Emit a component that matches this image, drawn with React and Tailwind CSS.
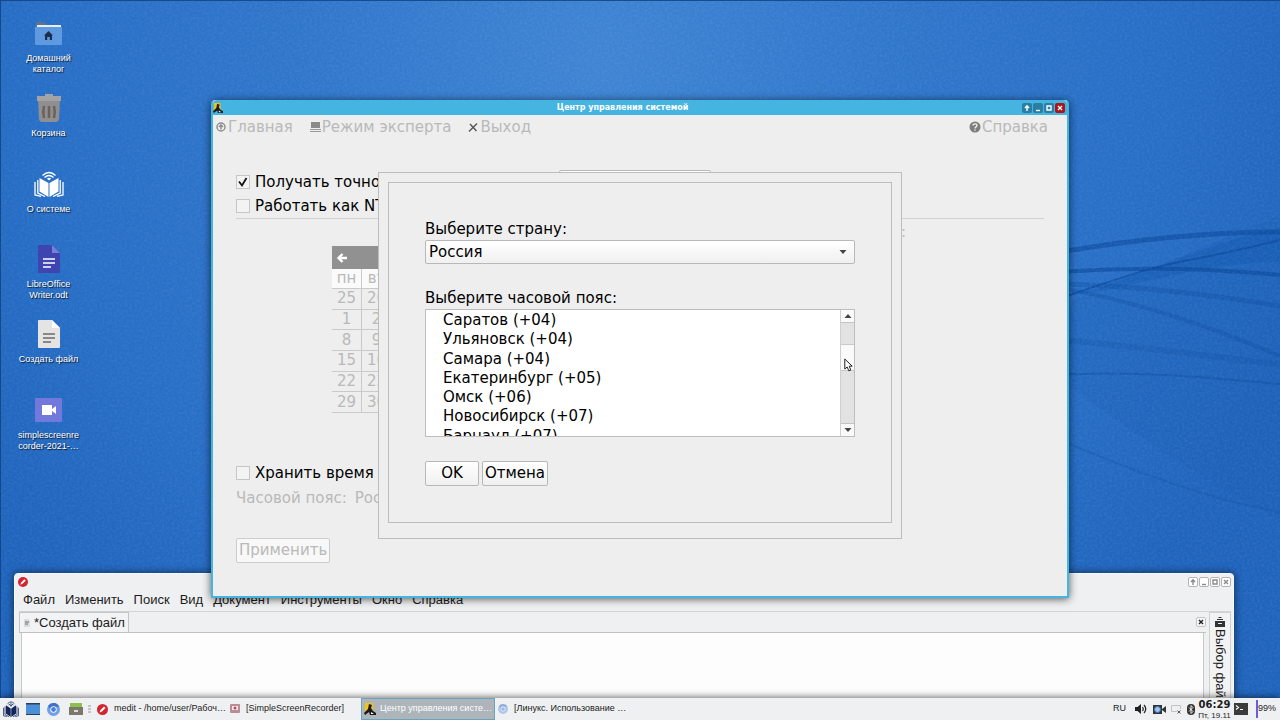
import { useState } from 'react';
import clsx from 'clsx';

const zones = [
  'Саратов (+04)',
  'Ульяновск (+04)',
  'Самара (+04)',
  'Екатеринбург (+05)',
  'Омск (+06)',
  'Новосибирск (+07)',
  'Барнаул (+07)',
];

const weekDays = ['пн', 'вт'];
const weeks = [
  [25, 26],
  [1, 2],
  [8, 9],
  [15, 16],
  [22, 23],
  [29, 30],
];

const editorMenu = ['Файл', 'Изменить', 'Поиск', 'Вид', 'Документ', 'Инструменты', 'Окно', 'Справка'];

export default function App() {
  return (
    <div className="relative h-screen overflow-hidden bg-[#2369c1] font-['Liberation_Sans',sans-serif] text-[#1c1c1c]">
      <Wallpaper />
      <DesktopIcons />
      <EditorWindow />
      <ControlCenter />
      <Taskbar />
    </div>
  );
}

function Wallpaper() {
  return (
    <svg className="absolute inset-0 h-full w-full" viewBox="0 0 1280 720" preserveAspectRatio="none" aria-hidden="true">
      <defs>
        <radialGradient id="sky" gradientUnits="userSpaceOnUse" cx="600" cy="60" r="760">
          <stop offset="0" stopColor="#3f85d4" />
          <stop offset="0.4" stopColor="#2f76cb" />
          <stop offset="0.75" stopColor="#276ec6" />
          <stop offset="1" stopColor="#1f64bc" />
        </radialGradient>
        <filter id="grain" x="0" y="0" width="100%" height="100%">
          <feTurbulence type="fractalNoise" baseFrequency="0.4" numOctaves="3" seed="4" />
          <feColorMatrix values="0 0 0 0 1  0 0 0 0 1  0 0 0 0 1  0.5 0 0 0 -0.17" />
        </filter>
      </defs>
      <rect width="1280" height="720" fill="url(#sky)" />
      <path d="M1060 306 C1130 275 1200 250 1280 215 L1280 520 C1200 480 1130 430 1060 380 Z" fill="#1458ad" opacity="0.18" />
      <path d="M1060 297 C1140 280 1210 240 1280 228 L1280 262 C1200 262 1130 290 1060 297 Z" fill="#0f56ae" opacity="0.35" />
      <g fill="none" stroke="#0b4a9c">
        <path d="M1060 252 C1120 242 1200 232 1280 232" strokeWidth="5" opacity="0.6" />
        <path d="M1060 272 C1130 267 1210 268 1280 275" strokeWidth="4" opacity="0.65" />
        <path d="M1060 298 C1110 282 1150 266 1200 258 C1230 252 1255 246 1280 240" strokeWidth="2" opacity="0.7" />
        <path d="M1060 284 C1140 286 1220 296 1280 306" strokeWidth="5" opacity="0.3" />
        <path d="M1060 288 C1130 300 1200 322 1280 356" strokeWidth="4" opacity="0.3" />
        <path d="M1060 375 C1130 370 1210 378 1280 384" strokeWidth="2" opacity="0.4" />
        <path d="M1060 340 C1140 346 1220 358 1280 364" strokeWidth="6" opacity="0.2" />
        <path d="M1060 440 C1130 470 1210 500 1280 512" strokeWidth="2" opacity="0.25" />
      </g>
      <rect width="1280" height="720" filter="url(#grain)" opacity="0.25" />
      <path d="M0 0.500H1280M0.500 0V720" stroke="#123f7d" opacity="0.8" />
    </svg>
  );
}

function DesktopIcons() {
  const items = [
    { icon: <HomeFolderIcon />, lines: ['Домашний', 'каталог'] },
    { icon: <TrashIcon />, lines: ['Корзина'] },
    { icon: <BookIcon className="h-[26px] w-[30px]" color="#ffffff" />, lines: ['О системе'] },
    { icon: <FileIcon body="#3f45b0" fold="#7a7ed6" text="#ffffff" />, lines: ['LibreOffice', 'Writer.odt'] },
    { icon: <FileIcon body="#e4e4e4" fold="#ffffff" text="#6b6b6b" />, lines: ['Создать файл'] },
    { icon: <VideoIcon />, lines: ['simplescreenre', 'corder-2021-…'] },
  ];
  return (
    <ul className="absolute top-[15px] left-2 grid h-[452px] w-[81px] auto-rows-fr">
      {items.map((item) => (
        <li key={item.lines[0]} className="flex flex-col items-center gap-0.5">
          <div className="flex h-9 items-center">{item.icon}</div>
          <div className="text-center text-[9px] leading-[11px] text-white [text-shadow:1px_1px_1px_rgba(0,0,0,0.8)]">
            {item.lines.map((line) => (
              <div key={line}>{line}</div>
            ))}
          </div>
        </li>
      ))}
    </ul>
  );
}

function EditorWindow() {
  return (
    <section className="absolute top-[573px] right-[46px] bottom-0 left-[14px] flex flex-col rounded-t border border-[#f8f8f8] bg-[#eff0f1] pr-0.5 pl-1 shadow-[0_0_8px_rgba(0,0,0,0.6)]">
      <header className="flex h-[15px] shrink-0 items-center justify-between">
        <MeditIcon className="-ml-px h-[10px] w-[10px]" />
        <div className="flex gap-px">
          {['up', 'min', 'max', 'close'].map((kind) => (
            <WindowButton key={kind} kind={kind} className="border border-[#b4b4b4] bg-white text-[#8a8a8a]" />
          ))}
        </div>
      </header>
      <nav className="flex h-[23px] shrink-0 items-center gap-[10px] border-b border-[#d4d4d4] px-1 text-[13px]">
        {editorMenu.map((name) => (
          <button key={name} type="button">
            {name}
          </button>
        ))}
      </nav>
      <div className="flex min-h-0 flex-1">
        <div className="flex min-w-0 flex-1 flex-col pr-[3px]">
          <div className="flex h-[21px] shrink-0 items-center justify-between border-b border-[#c0c0c0]">
            <button type="button" className="flex h-5 items-center gap-1 border border-b-0 border-[#c4c4c4] bg-[#f2f3f4] px-1 pr-[3px] text-[13px]">
              <svg className="h-2 w-[6px]" viewBox="0 0 6 8" aria-hidden="true">
                <path d="M0 0H4L6 2V8H0Z" fill="#dcdcdc" />
                <path d="M1 3H5M1 5H4" stroke="#6d6d6d" />
              </svg>
              *Создать файл
            </button>
            <WindowButton kind="close" className="border border-[#c4c4c4] bg-[#f7f7f7] text-[#202020]" />
          </div>
          <textarea aria-label="Текст" className="mx-0.5 block min-h-0 flex-1 resize-none border border-t-0 border-[#c8c8c8] bg-[#fdfdfd] outline-none" />
        </div>
        <button type="button" className="flex w-[22px] items-center gap-0.5 overflow-hidden border border-[#d0d0d0] bg-[#f2f3f4] pt-1 text-[13px] whitespace-nowrap [writing-mode:vertical-rl]">
          <svg className="h-[10px] w-[10px] shrink-0" viewBox="0 0 10 10" aria-hidden="true">
            <path d="M3.500 0.500H6.500M2 2.500H8" stroke="#333" />
            <path d="M0 4H10V10H0Z" fill="#333" />
            <path d="M3 6.500H7" stroke="#eee" />
          </svg>
          Выбор файла
        </button>
      </div>
    </section>
  );
}

function ControlCenter() {
  const [ntp, setNtp] = useState(true);
  const [server, setServer] = useState(false);
  const [utc, setUtc] = useState(false);

  return (
    <section className="absolute inset-x-[211px] top-[100px] h-[498px] rounded-t border-2 border-t-0 border-[#45b4e0] bg-[#eeeeee] font-['DejaVu_Sans',sans-serif] text-[15px] shadow-[0_1px_9px_rgba(0,0,0,0.65)]">
      <header className="flex h-[15px] items-center justify-between rounded-t bg-[#45b4e0]">
        <AltIcon className="h-[10px] w-[10px]" />
        <h1 className="text-[8px] font-bold text-white">Центр управления системой</h1>
        <div className="flex gap-px pr-0.5">
          <WindowButton kind="up" className="bg-[#2a7ea3] text-white" />
          <WindowButton kind="min" className="bg-[#2a7ea3] text-white" />
          <WindowButton kind="max" className="bg-[#2a7ea3] text-white" />
          <WindowButton kind="close" className="bg-[#b01218] text-white" />
        </div>
      </header>

      <nav className="flex h-6 items-center gap-[17px] pr-[19px] pl-[3px] text-[#b9b9b9]">
        <button type="button" className="flex items-center gap-0.5">
          <svg className="h-[10px] w-[10px]" viewBox="0 0 10 10" aria-hidden="true">
            <circle cx="5" cy="5" r="4" fill="#f2f2f2" stroke="#8f8f8f" strokeWidth="1.500" />
            <path d="M5 7.500V3M3 5L5 2.800L7 5" fill="none" stroke="#8f8f8f" strokeWidth="1.500" />
          </svg>
          Главная
        </button>
        <button type="button" className="flex items-center gap-px">
          <svg className="h-[10px] w-[11px]" viewBox="0 0 11 10" aria-hidden="true">
            <path d="M1 0H10V6H1Z" fill="#8a8a8a" />
            <path d="M0 7.500H11M0 9.500H11" stroke="#9a9a9a" />
          </svg>
          Режим эксперта
        </button>
        <button type="button" className="flex items-center gap-0.5">
          <svg className="h-[9px] w-[10px]" viewBox="0 0 10 9" aria-hidden="true">
            <path d="M2 1L8.500 8M9 0.500L1 8.500" stroke="#555" strokeWidth="1.400" />
          </svg>
          Выход
        </button>
        <button type="button" className="ml-auto flex items-center gap-px">
          <svg className="h-3 w-3" viewBox="0 0 12 12" aria-hidden="true">
            <circle cx="6" cy="6" r="5.500" fill="#7d7d7d" />
            <path d="M4 4.500C4 2.200 8 2.200 8 4.500C8 6 6 5.800 6 7.500M6 8.500V9.800" fill="none" stroke="#f4f4f4" strokeWidth="1.300" />
          </svg>
          Справка
        </button>
      </nav>

      <main className="pt-[31px] pr-[23px] pl-[23px]">
        <div className="flex">
          <div className="w-[323px] shrink-0">
            <CheckRow checked={ntp} onChange={setNtp}>
              Получать точное
            </CheckRow>
          </div>
          <input aria-label="NTP-сервер" className="h-6 w-[152px] rounded-xs border border-[#b8b8b8] bg-white" />
        </div>
        <CheckRow checked={server} onChange={setServer}>
          Работать как NTP
        </CheckRow>
        <hr className="border-[#d2d2d2]" />

        <div className="flex h-[27px] items-center justify-end pr-[138px] text-[#b9b9b9]">Время:</div>
        <div className="ml-24 w-[60px] text-[#b9b9b9]">
          <div className="flex h-[23px] items-center bg-[#919191] px-1">
            <button type="button" aria-label="Предыдущий месяц">
              <svg className="h-3 w-3" viewBox="0 0 12 12" aria-hidden="true">
                <path d="M11 6H3M6.500 2L2.500 6L6.500 10" fill="none" stroke="#fff" strokeWidth="2.400" />
              </svg>
            </button>
          </div>
          <table className="h-36 w-full table-fixed border-collapse text-center">
            <thead>
              <tr className="bg-[#fafafa]">
                {weekDays.map((day) => (
                  <th key={day} className="border-r border-b border-[#cacaca] p-0 leading-[19px] font-normal">
                    {day}
                  </th>
                ))}
              </tr>
            </thead>
            <tbody>
              {weeks.map((week) => (
                <tr key={week[0]}>
                  {week.map((day) => (
                    <td key={day} className="border-r border-b border-[#cacaca] p-0 leading-[19px]">
                      {day}
                    </td>
                  ))}
                </tr>
              ))}
            </tbody>
          </table>
        </div>

        <div className="mt-12">
          <CheckRow checked={utc} onChange={setUtc}>
            Хранить время в
          </CheckRow>
        </div>
        <div className="flex h-[26px] items-center gap-2 text-[#b9b9b9]">
          <span>Часовой пояс:</span>
          <span>Россия</span>
        </div>
        <button type="button" disabled className="mt-[27px] h-[25px] rounded-xs border border-[#cccccc] bg-[#f8f8f8] px-0.5 leading-none text-[#b9b9b9]">
          Применить
        </button>
      </main>

      <ZoneDialog />
    </section>
  );
}

function CheckRow({ checked, onChange, children }) {
  return (
    <label className="flex h-6 items-center gap-[5px] whitespace-nowrap text-black">
      <span className="relative flex">
        <input
          type="checkbox"
          checked={checked}
          onChange={(e) => onChange(e.target.checked)}
          className="h-[14px] w-[14px] appearance-none border border-[#c6c6c6] bg-[#f3f3f3]"
        />
        {checked && (
          <svg className="pointer-events-none absolute inset-0 h-[14px] w-[14px]" viewBox="0 0 14 14" aria-hidden="true">
            <path d="M3 6.500L6 10.500L10.500 3" fill="none" stroke="#111" strokeWidth="1.800" />
          </svg>
        )}
      </span>
      {children}
    </label>
  );
}

function ZoneDialog() {
  return (
    <div role="dialog" aria-label="Часовой пояс" className="absolute inset-x-[165px] top-[72px] border border-[#bdbdbd] bg-[#eeeeee] p-[9px] pb-[15px] text-black">
      <div className="border border-[#bdbdbd] px-9 pt-[34px] pb-9">
        <label htmlFor="country" className="block h-[23px] leading-6">
          Выберите страну:
        </label>
        <div className="relative">
          <select
            id="country"
            defaultValue="ru"
            className="block h-6 w-full appearance-none rounded-xs border border-[#b8b8b8] bg-linear-to-b from-white to-[#f0f0f0] px-[3px] leading-none"
          >
            <option value="ru">Россия</option>
          </select>
          <Triangle className="pointer-events-none absolute top-[10px] right-2 rotate-180" />
        </div>

        <div id="zone-label" className="mt-[22px] h-[23px] leading-6">
          Выберите часовой пояс:
        </div>
        <div className="flex h-32 border border-[#bdbdbd] bg-white">
          <div className="min-w-0 flex-1 overflow-hidden">
            <ul role="listbox" aria-labelledby="zone-label" className="grid h-[135px] auto-rows-fr pl-[17px] leading-5">
              {zones.map((zone) => (
                <li key={zone} role="option" aria-selected="false" className="min-h-0">
                  {zone}
                </li>
              ))}
            </ul>
          </div>
          <div className="relative flex w-[14px] flex-col border-l border-[#cfcfcf] bg-[#e2e2e2]">
            <button type="button" aria-label="Вверх" className="flex h-[13px] items-center justify-center border-b border-[#c4c4c4] bg-[#fafafa]">
              <Triangle />
            </button>
            <div className="mt-[21px] h-[27px] border-y border-[#c8c8c8] bg-[#fafafa]" />
            <button type="button" aria-label="Вниз" className="mt-auto flex h-[13px] items-center justify-center border-t border-[#c4c4c4] bg-[#fafafa]">
              <Triangle className="rotate-180" />
            </button>
            <svg className="absolute top-12 left-[3px] h-[14px] w-[9px]" viewBox="0 0 9 14" aria-hidden="true">
              <path d="M0.800 1V11L3.200 9L4.800 12.800L6.800 12L5.200 8.200H8.200Z" fill="#fff" stroke="#222" />
            </svg>
          </div>
        </div>

        <div className="mt-6 flex gap-[3px]">
          <DialogButton className="w-[54px]">OK</DialogButton>
          <DialogButton className="w-[66px]">Отмена</DialogButton>
        </div>
      </div>
    </div>
  );
}

function DialogButton({ className, children }) {
  return (
    <button
      type="button"
      className={clsx('h-[25px] rounded-xs border border-[#b8b8b8] bg-linear-to-b from-white to-[#f0f0f0] leading-none', className)}
    >
      {children}
    </button>
  );
}

function Taskbar() {
  return (
    <footer className="absolute inset-x-0 bottom-0 flex h-[22px] items-center bg-[#eff0f1] pr-1 pl-[3px] text-[9px] shadow-[0_-2px_6px_rgba(0,0,0,0.45)]">
      <div className="flex items-center gap-[7px]">
        <BookIcon className="h-4 w-4" color="#12245c" />
        <svg className="h-3 w-[14px]" viewBox="0 0 14 12" aria-hidden="true">
          <path d="M0 0H14V12H0Z" fill="#4a90d9" />
          <path d="M0 0H14V1.500H0ZM0 11H14V12H0Z" fill="#2d3d55" />
        </svg>
        <ChromiumIcon className="h-[13px] w-[13px]" />
        <svg className="ml-0.5 h-3 w-[14px]" viewBox="0 0 14 12" aria-hidden="true">
          <path d="M1 0H13V5H1Z" fill="#8cc152" />
          <path d="M0 4H14V12H0Z" fill="#7c766b" />
          <path d="M5 8H9" stroke="#fff" strokeWidth="1.500" />
        </svg>
      </div>
      <svg className="mx-1 h-2 w-[5px]" viewBox="0 0 5 8" aria-hidden="true">
        <path d="M1 1H4M1 4H4M1 7H4" stroke="#999" />
      </svg>

      <button type="button" className="flex w-[134px] items-center gap-[6px] pl-px">
        <MeditIcon className="h-[11px] w-[11px] shrink-0" />
        <span className="truncate">medit - /home/user/Рабоч…</span>
      </button>
      <button type="button" className="flex w-[131px] items-center gap-[6px]">
        <svg className="h-[10px] w-[10px] shrink-0" viewBox="0 0 10 10" aria-hidden="true">
          <rect width="10" height="9" rx="1" fill="#b88d95" />
          <path d="M2 2H8V6H2Z" fill="#f4e8ea" />
          <circle cx="5" cy="4" r="1.500" fill="#c24b55" />
        </svg>
        <span className="whitespace-nowrap">[SimpleScreenRecorder]</span>
      </button>
      <button type="button" className="flex h-[22px] w-[134px] items-center gap-1 border border-[#6ba3bf] bg-[#adb5ba] px-0.5 text-white">
        <AltIcon className="h-3 w-3 shrink-0" />
        <span className="truncate">Центр управления систе…</span>
      </button>
      <button type="button" className="flex items-center gap-[6px] pl-[3px] whitespace-nowrap">
        <ChromiumIcon className="h-[10px] w-[10px] opacity-50" />
        [Линукс. Использование …
      </button>

      <div className="ml-auto flex items-center">
        <span className="mr-[9px]">RU</span>
        <svg className="mr-[6px] h-[10px] w-3" viewBox="0 0 12 10" aria-hidden="true">
          <path d="M0 3H2.500L6 0V10L2.500 7H0Z" fill="#222" />
          <path d="M7.500 3Q9 5 7.500 7M9 1Q12.500 5 9 9" fill="none" stroke="#222" strokeWidth="1.200" />
        </svg>
        <svg className="mr-[5px] h-[9px] w-[13px]" viewBox="0 0 13 9" aria-hidden="true">
          <path d="M0 0H9V9H0ZM9 4L13 1V8L9 5Z" fill="#333" />
          <circle cx="4.500" cy="4.500" r="3" fill="#9fc2ee" stroke="#3c72b8" />
        </svg>
        <svg className="mr-[6px] h-[10px] w-[10px]" viewBox="0 0 10 10" aria-hidden="true">
          <path d="M6 7.500H0.500V1.500H9.500V5" fill="none" stroke="#c2c2c2" />
          <path d="M6.500 6.500L9.500 9.500M9.500 6.500L6.500 9.500" stroke="#555" />
        </svg>
        <svg className="mr-1 h-[11px] w-2" viewBox="0 0 8 11" aria-hidden="true">
          <rect width="8" height="11" rx="4" fill="#333" />
          <path d="M2 3.500L6 7.500L4 9.500V1.500L6 3.500L2 7.500" fill="none" stroke="#fff" strokeWidth="0.900" />
        </svg>
        <div className="mr-1 flex w-[31px] flex-col items-center whitespace-nowrap">
          <span className="font-['DejaVu_Sans',sans-serif] text-[10px] leading-3 font-bold">06:29</span>
          <span className="text-[8px] leading-[9px]">Пт, 19.11</span>
        </div>
        <svg className="mr-2 h-3 w-[14px]" viewBox="0 0 14 12" aria-hidden="true">
          <path d="M0 0H14V12H0Z" fill="#3b3b3b" />
          <path d="M2 2.500L4.500 4.500L2 6.500M6 6.500H9" fill="none" stroke="#fff" strokeWidth="1.200" />
        </svg>
        <div className="h-[18px] w-0.5 bg-[#6a5be0]" />
        <span>99%</span>
      </div>
    </footer>
  );
}

function WindowButton({ kind, className }) {
  const paths = {
    up: 'M4 7V2M2 4L4 1.800L6 4',
    min: 'M2 6.500H6',
    max: 'M2 2H6V6H2Z',
    close: 'M2 2L6 6M6 2L2 6',
  };
  return (
    <button type="button" aria-label={kind} className={clsx('flex h-[10px] w-[10px] items-center justify-center rounded-xs', className)}>
      <svg className="h-2 w-2 shrink-0" viewBox="0 0 8 8" aria-hidden="true">
        <path d={paths[kind]} fill="none" stroke="currentColor" strokeWidth="1.400" />
      </svg>
    </button>
  );
}

function Triangle({ className }) {
  return (
    <svg className={clsx('h-1 w-2', className)} viewBox="0 0 8 4" aria-hidden="true">
      <path d="M0.500 4L4 0L7.500 4Z" fill="#444" />
    </svg>
  );
}

function HomeFolderIcon() {
  return (
    <svg className="h-6 w-7" viewBox="0 0 28 24" aria-hidden="true">
      <path d="M1 1H9L12 4H26V8H1Z" fill="#5d7391" />
      <path d="M2 4H26V9H2Z" fill="#e9eef5" />
      <path d="M0 6H27V23Q27 24 26 24H1Q0 24 0 23Z" fill="#5f9ae0" />
      <path d="M13.500 10L18 14.500H17V19H14.800V16H12.200V19H10V14.500H9Z" fill="#1b2f4d" />
    </svg>
  );
}

function TrashIcon() {
  return (
    <svg className="h-7 w-[26px]" viewBox="0 0 26 28" aria-hidden="true">
      <path d="M2 5H24L23 25Q22.500 28 20 28H6Q3.500 28 3 25Z" fill="#8f8f8f" />
      <path d="M9 0H17V2H25V7H1V2H9Z" fill="#a3a3a3" />
      <path d="M8 12Q6.500 18 8 24M13 12V24M18 12Q19.500 18 18 24" fill="none" stroke="#6a625a" strokeWidth="2.500" />
    </svg>
  );
}

function BookIcon({ className, color }) {
  return (
    <svg className={className} viewBox="0 0 30 26" preserveAspectRatio="none" aria-hidden="true">
      <path d="M5.500 7L14.500 12V26L5.500 20.500ZM24.500 7L15.500 12V26L24.500 20.500Z" fill={color} />
      <path d="M3.800 9V22L11 25.500M1 11V24L7 25.300M26.200 9V22L19 25.500M29 11V24L23 25.300" fill="none" stroke={color} strokeWidth="1.300" />
      <path d="M8.500 4.500Q15 -1.500 21.500 4.500M10.500 6.500Q15 2.500 19.500 6.500" fill="none" stroke={color} strokeWidth="1.400" />
      <path d="M12.800 7.500Q15 5.800 17.200 7.500L15 9.500Z" fill={color} />
    </svg>
  );
}

function FileIcon({ body, fold, text }) {
  return (
    <svg className="h-7 w-[22px]" viewBox="0 0 22 28" aria-hidden="true">
      <path d="M1 0H14L22 8V27Q22 28 21 28H1Q0 28 0 27V1Q0 0 1 0Z" fill={body} />
      <path d="M14 0L22 8H14Z" fill={fold} />
      <path d="M5 14H17M5 18H17M5 22H13" stroke={text} strokeWidth="1.600" />
    </svg>
  );
}

function VideoIcon() {
  return (
    <svg className="h-6 w-[27px]" viewBox="0 0 27 24" aria-hidden="true">
      <rect width="27" height="24" rx="1" fill="#7379dc" />
      <path d="M7 7H17V11L21 8V16L17 13V17H7Z" fill="#fff" />
    </svg>
  );
}

function MeditIcon({ className }) {
  return (
    <svg className={className} viewBox="0 0 11 11" aria-hidden="true">
      <circle cx="5.500" cy="5.500" r="5.500" fill="#d5232f" />
      <path d="M2.500 8.500L3.500 6L7 2.500L8.500 4L5 7.500Z" fill="#fff" />
    </svg>
  );
}

function AltIcon({ className }) {
  return (
    <svg className={className} viewBox="0 0 12 12" aria-hidden="true">
      <path d="M1 0H9V9H1Z" fill="#f2c40f" />
      <path d="M5 1L8 2L7 5L9 8L12 10V12H6L5 9L1 12L0 10L4 6Z" fill="#1a1a1a" />
      <path d="M7 9L10 11H7Z" fill="#fff" />
    </svg>
  );
}

function ChromiumIcon({ className }) {
  return (
    <svg className={className} viewBox="0 0 13 13" aria-hidden="true">
      <circle cx="6.500" cy="6.500" r="6.500" fill="#6f9fe8" />
      <path d="M1 3A6.500 6.500 0 0 1 12.300 3.800H6.500L3.800 7Z" fill="#3f6fc9" />
      <circle cx="6.500" cy="6.500" r="3.200" fill="#fff" />
      <circle cx="6.500" cy="6.500" r="2.400" fill="#4a80db" />
    </svg>
  );
}
